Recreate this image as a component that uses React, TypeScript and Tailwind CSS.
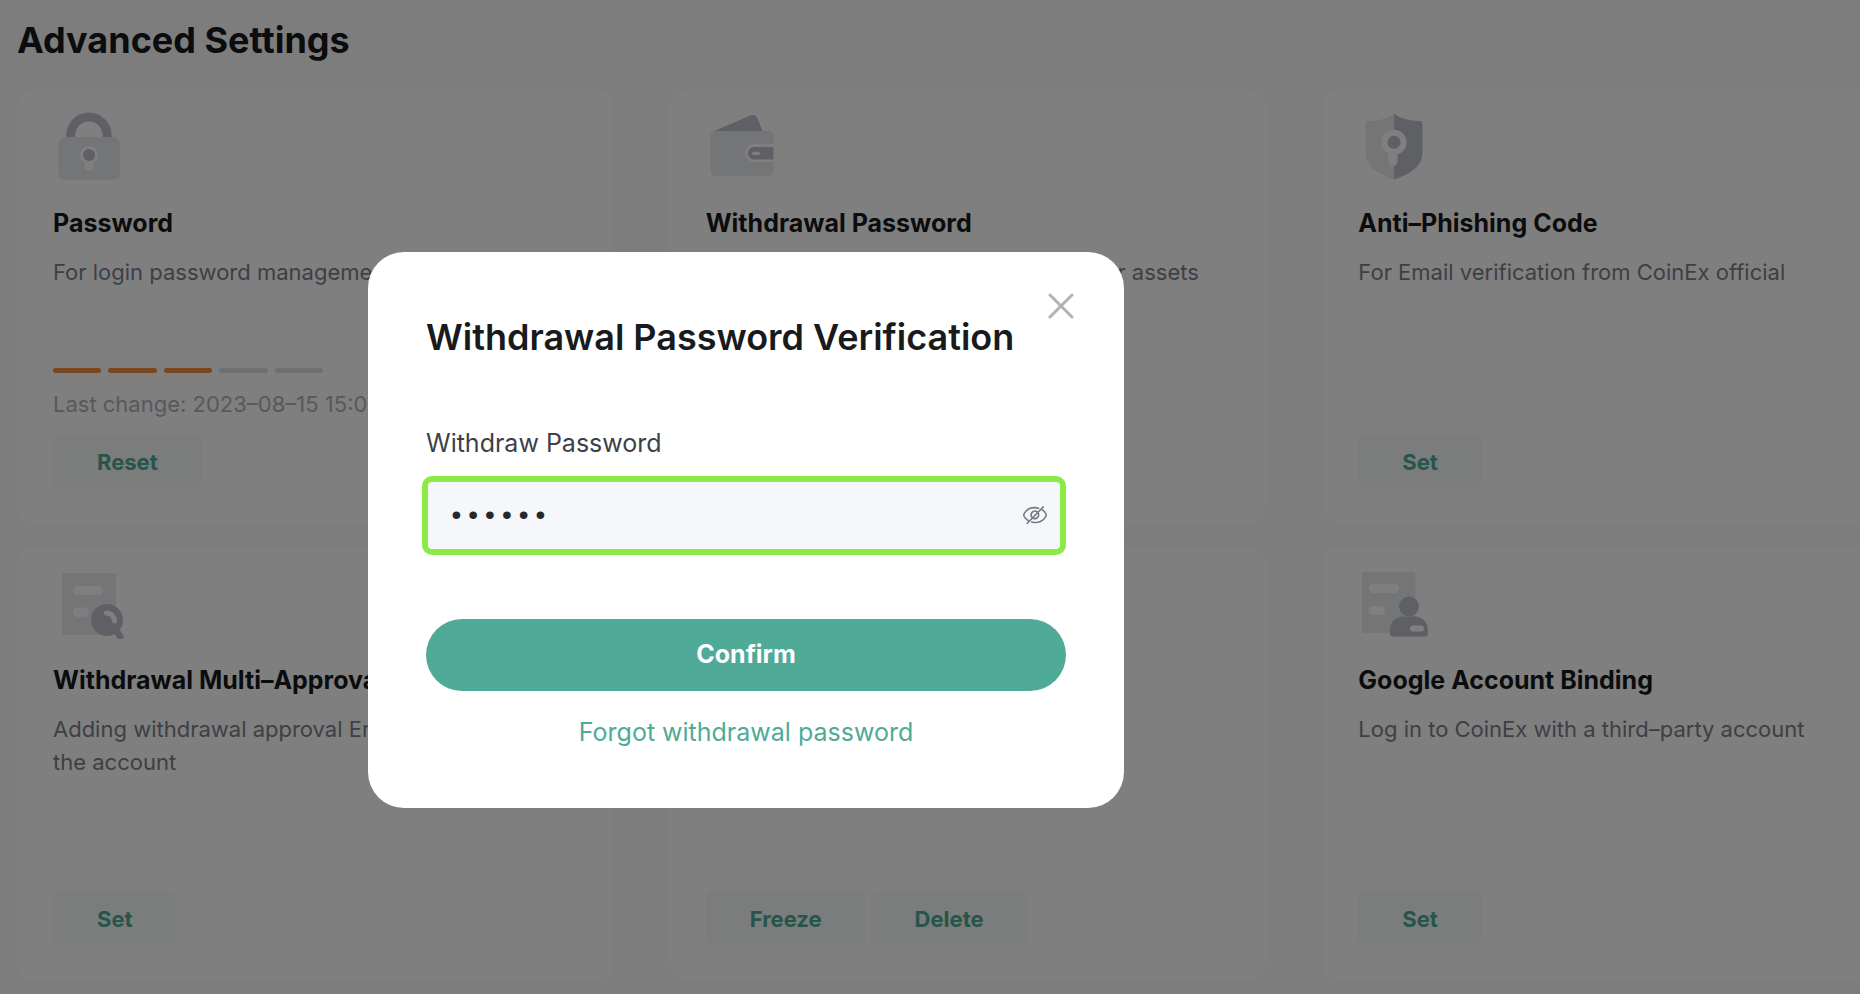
import { useState } from "react";
import type { ReactNode } from "react";

type Setting = {
  title?: string;
  text?: string;
  icon: ReactNode;
  actions: string[];
  strength?: number;
  changed?: string;
};

const LockIcon = () => (
  <svg viewBox="0 0 72 72" className="size-[72px]" fill="none" aria-hidden="true">
    <path d="M17.7 28V25.2A18.2 18.2 0 0 1 54.1 25.2V28" stroke="#bfc1ca" strokeWidth="9" />
    <rect x="5.5" y="27" width="61.5" height="43" rx="7" fill="#e9ebef" />
    <path d="M36 45V56.5" stroke="#fff" strokeWidth="9" strokeLinecap="round" />
    <circle cx="36" cy="45" r="9" fill="#fff" />
    <circle cx="36" cy="45" r="6" fill="#bfc1ca" />
  </svg>
);

const WalletIcon = () => (
  <svg viewBox="0 0 72 72" className="size-[72px]" fill="none" aria-hidden="true">
    <path d="M8.5 21L44 5.6Q49.6 3.4 51.8 9L56.5 21Z" fill="#bfc1ca" />
    <rect x="4.5" y="21" width="63" height="45" rx="5" fill="#e9ebef" />
    <path d="M67.5 34H48A9 9 0 0 0 48 52H67.5Z" fill="#fff" />
    <path d="M67.5 37H48.2A6.2 6.2 0 0 0 48.2 49.5H67.5Z" fill="#bfc1ca" />
    <rect x="46" y="41.7" width="8" height="3.4" rx="1.7" fill="#fff" />
  </svg>
);

const ShieldIcon = () => (
  <svg viewBox="0 0 72 72" className="size-[72px]" fill="none" aria-hidden="true">
    <path d="M36 3.5Q27 11 9.5 11Q7.5 11 7.5 13V42C7.5 56 19 64 36 69.5Z" fill="#e9ebef" />
    <path d="M36 3.5Q45 11 62.5 11Q64.5 11 64.5 13V42C64.5 56 53 64 36 69.5Z" fill="#bfc1ca" />
    <path d="M35 36V51.5" stroke="#fff" strokeWidth="9" strokeLinecap="round" />
    <circle cx="36" cy="32.3" r="12.6" fill="#fff" />
    <circle cx="36" cy="32.3" r="6.5" fill="#bfc1ca" />
  </svg>
);

const ReviewIcon = () => (
  <svg viewBox="0 0 72 72" className="size-[72px]" fill="none" aria-hidden="true">
    <rect x="9" y="6" width="54" height="62" rx="2.5" fill="#e9ebef" />
    <rect x="20" y="19" width="30" height="9" rx="4.5" fill="#fff" />
    <rect x="20" y="40.5" width="16" height="9.5" rx="4.7" fill="#fff" />
    <path d="M62 62L67.3 69.5" stroke="#bfc1ca" strokeWidth="6.5" strokeLinecap="round" />
    <circle cx="54" cy="53" r="16" fill="#bfc1ca" />
    <path d="M53.5 46Q61 46.5 61.5 54" stroke="#fff" strokeWidth="5" strokeLinecap="round" />
  </svg>
);

const AccountIcon = () => (
  <svg viewBox="0 0 72 72" className="size-[72px]" fill="none" aria-hidden="true">
    <rect x="4" y="5" width="53.5" height="61" rx="2.5" fill="#e9ebef" />
    <rect x="11" y="17" width="30" height="9" rx="4.5" fill="#fff" />
    <rect x="11" y="39" width="16" height="9" rx="4.5" fill="#fff" />
    <circle cx="51" cy="39.5" r="10" fill="#bfc1ca" />
    <path d="M45 49.5H57Q70 51 70 64V67Q70 69.5 67.5 69.5H34.5Q32 69.5 32 67V64Q32 51 45 49.5Z" fill="#bfc1ca" />
    <rect x="52" y="58.5" width="14" height="6" rx="3" fill="#fff" />
  </svg>
);

const settings: Setting[] = [
  {
    title: "Password",
    text: "For login password management",
    icon: <LockIcon />,
    actions: ["Reset"],
    strength: 3,
    changed: "2023–08–15 15:08",
  },
  {
    title: "Withdrawal Password",
    text: "For withdrawal and management of your assets",
    icon: <WalletIcon />,
    actions: [],
  },
  {
    title: "Anti–Phishing Code",
    text: "For Email verification from CoinEx official",
    icon: <ShieldIcon />,
    actions: ["Set"],
  },
  {
    title: "Withdrawal Multi–Approval",
    text: "Adding withdrawal approval Email to protect the\u00a0account",
    icon: <ReviewIcon />,
    actions: ["Set"],
  },
  {
    icon: <AccountIcon />,
    actions: ["Freeze", "Delete"],
  },
  {
    title: "Google Account Binding",
    text: "Log in to CoinEx with a third–party account",
    icon: <AccountIcon />,
    actions: ["Set"],
  },
];

function SettingCard({ title, text, icon, actions, strength, changed }: Setting) {
  return (
    <section className="flex min-h-[435px] flex-col rounded-[20px] bg-white px-9 pt-[21px] pb-9">
      {icon}
      {title && <h2 className="mt-[23px] text-[25px] leading-9 font-bold text-[#17191b]">{title}</h2>}
      {text && <p className="mt-[15px] text-[22px] leading-[33px] text-[#7c7e8b]">{text}</p>}

      <div className="mt-auto">
        {strength !== undefined && (
          <div className="flex w-[270px] gap-[7px]">
            {[1, 2, 3, 4, 5].map((level) => (
              <span
                key={level}
                className={`h-[5px] flex-1 rounded-full ${level <= strength ? "bg-[#f29141]" : "bg-[#dfe1e6]"}`}
              />
            ))}
          </div>
        )}
        {changed && (
          <p className="mt-[15px] mb-[13px] text-[22px] leading-[33px] text-[#b0b1b8]">Last change: {changed}</p>
        )}
        <div className="flex gap-[5px]">
          {actions.map((action) => (
            <button
              key={action}
              type="button"
              className="h-[54px] rounded-lg bg-[#f4faf8] px-11 pt-[3px] text-[22px] font-bold text-[#4faa97]"
            >
              {action}
            </button>
          ))}
        </div>
      </div>
    </section>
  );
}

function VerificationDialog() {
  const [password, setPassword] = useState("123456");
  const [visible, setVisible] = useState(false);

  return (
    <div className="fixed inset-0 flex items-center justify-center bg-black/50 pt-[66px] pr-[368px]">
      <div
        role="dialog"
        aria-modal="true"
        aria-labelledby="dialog-title"
        className="relative w-[756px] rounded-[36px] bg-white px-[58px] pt-[61px] pb-[58px]"
      >
        <button type="button" aria-label="Close" className="absolute top-10 right-[49px] p-px">
          <svg viewBox="0 0 26 26" className="size-[26px]" fill="none" stroke="#b1b2b6" strokeWidth="3" strokeLinecap="round">
            <path d="M2 2L24 24M24 2L2 24" />
          </svg>
        </button>

        <h1 id="dialog-title" className="text-4xl leading-[48px] font-semibold text-[#181a1c]">
          Withdrawal Password Verification
        </h1>

        <form onSubmit={(e) => e.preventDefault()}>
          <label htmlFor="withdraw-password" className="mt-16 block text-[25px] leading-9 text-[#3e3f47]">
            Withdraw Password
          </label>
          <div className="mt-[15px] -ml-1 flex h-[79px] items-center rounded-[10px] border-[6px] border-[#8aeb48] bg-[#f6f7fa] pr-[13px] pb-0.5 pl-5">
            <input
              id="withdraw-password"
              type={visible ? "text" : "password"}
              value={password}
              onChange={(e) => setPassword(e.target.value)}
              className="min-w-0 flex-1 bg-transparent pt-1 font-['Liberation_Mono',monospace] text-[28px] text-[#26272b] outline-none"
            />
            <button type="button" aria-label="Show password" onClick={() => setVisible(!visible)}>
              <svg viewBox="0 0 24 18" className="h-[18px] w-6" fill="none" stroke="#757782" strokeWidth="1.6" strokeLinecap="round">
                <path d="M15.5 2.2C9 .2 3 3.5 1.2 7.5Q.5 9 1.2 10.5Q2.5 13 5.2 14.6" />
                <path d="M8.8 15.9C15 17.8 21 14.5 22.8 10.5Q23.5 9 22.8 7.5Q21.8 5.3 19.2 3.7" />
                <path d="M14.2 5.9A3.8 3.8 0 0 0 8.6 10.8M10.2 12.2A3.8 3.8 0 0 0 15.5 7.6" />
                <path d="M20.3 .8L4.3 17.2" />
              </svg>
            </button>
          </div>
          <button type="submit" className="mt-16 h-[72px] w-full rounded-full bg-[#4faa97] text-[25px] font-bold text-white">
            Confirm
          </button>
        </form>

        <div className="mt-[23px] text-center text-[25px] leading-9">
          <a href="#forgot" className="text-[#4faa97]">
            Forgot withdrawal password
          </a>
        </div>
      </div>
    </div>
  );
}

export default function App() {
  return (
    <div className="min-h-screen overflow-hidden bg-[#fafafa] pb-[13px] pl-[17px] font-['Inter','Liberation_Sans',sans-serif]">
      <h1 className="pt-4 text-4xl leading-[48px] font-bold text-[#17191b]">Advanced Settings</h1>

      {/* The last column runs past the right edge of the window */}
      <main className="mt-[25px] -mr-[59px] grid grid-cols-3 gap-x-14 gap-y-[22px]">
        {settings.map((setting, i) => (
          <SettingCard key={i} {...setting} />
        ))}
      </main>

      <VerificationDialog />
    </div>
  );
}
